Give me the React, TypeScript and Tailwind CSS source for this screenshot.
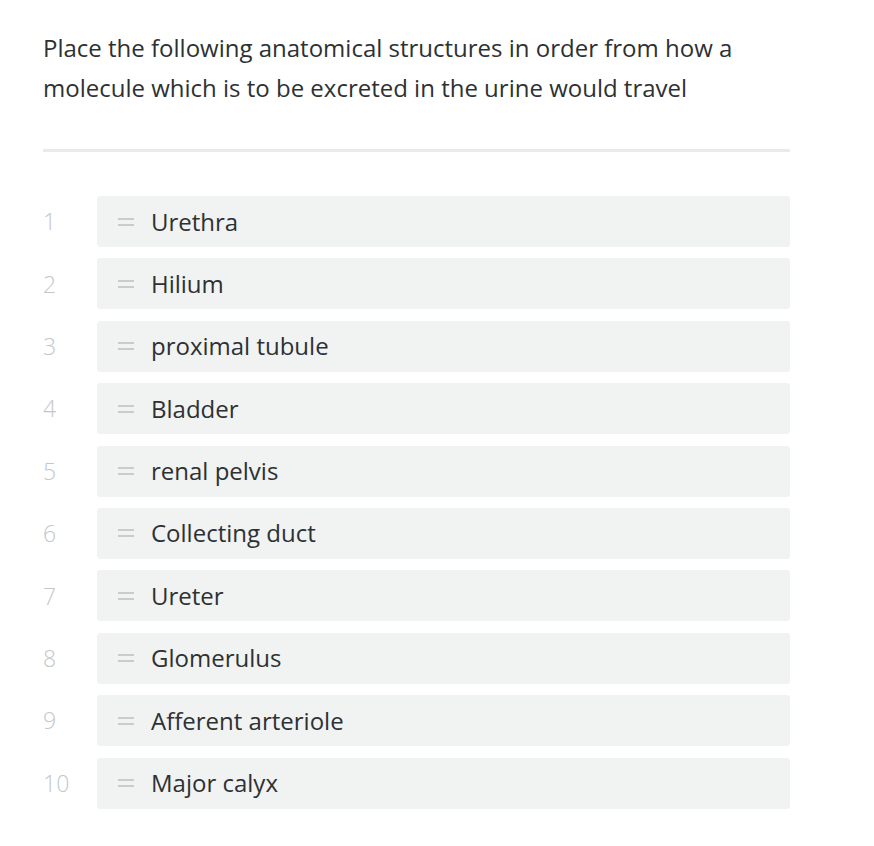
const items = [
  "Urethra",
  "Hilium",
  "proximal tubule",
  "Bladder",
  "renal pelvis",
  "Collecting duct",
  "Ureter",
  "Glomerulus",
  "Afferent arteriole",
  "Major calyx",
];

const DragHandle = () => (
  <svg width="16" height="8" viewBox="0 0 16 8" className="shrink-0">
    <rect x="0" y="0" width="16" height="2" fill="#c9cccd" />
    <rect x="0" y="6" width="16" height="2" fill="#c9cccd" />
  </svg>
);

export default function App() {
  return (
    <div className="min-h-screen bg-white font-['Open_Sans',sans-serif] text-[#2d3133]">
      <div className="w-[747px] pl-[43px] pt-[28px] box-content">
        <p className="text-[24px] leading-[40px]">
          Place the following anatomical structures in order from how a molecule which is to be excreted in the urine
          would travel
        </p>
        <div className="mt-[41px] h-[3px] bg-[#e8eaeb]" />
        <ol className="mt-[44px] flex flex-col gap-[11.4px]">
          {items.map((label, i) => (
            <li key={label} className="flex items-center">
              <span className="w-[54px] shrink-0 text-[23px] font-light text-[#c4c7c8]">{i + 1}</span>
              <div className="flex h-[51px] flex-1 items-center rounded-[3px] bg-[#f1f2f2] pl-[21px]">
                <DragHandle />
                <span className="ml-[17px] text-[24px] text-[#2d3133]">{label}</span>
              </div>
            </li>
          ))}
        </ol>
      </div>
    </div>
  );
}
